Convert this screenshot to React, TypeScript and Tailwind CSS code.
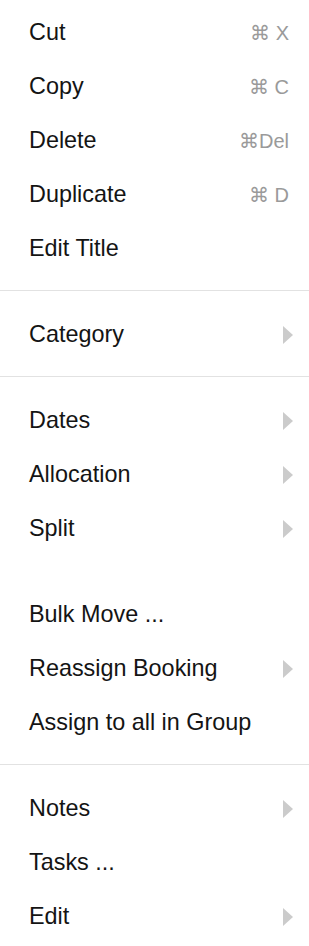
type Item = { label: string; shortcut?: string; submenu?: boolean };

const groups: { items: Item[]; divider: boolean }[] = [
  {
    items: [
      { label: 'Cut', shortcut: '⌘ X' },
      { label: 'Copy', shortcut: '⌘ C' },
      { label: 'Delete', shortcut: '⌘Del' },
      { label: 'Duplicate', shortcut: '⌘ D' },
      { label: 'Edit Title' },
    ],
    divider: true,
  },
  { items: [{ label: 'Category', submenu: true }], divider: true },
  {
    items: [
      { label: 'Dates', submenu: true },
      { label: 'Allocation', submenu: true },
      { label: 'Split', submenu: true },
    ],
    divider: false,
  },
  {
    items: [
      { label: 'Bulk Move ...' },
      { label: 'Reassign Booking', submenu: true },
      { label: 'Assign to all in Group' },
    ],
    divider: true,
  },
  {
    items: [
      { label: 'Notes', submenu: true },
      { label: 'Tasks ...' },
      { label: 'Edit', submenu: true },
    ],
    divider: false,
  },
];

function Arrow() {
  return (
    <svg width="10" height="18" viewBox="0 0 10 18" className="block">
      <path d="M0 0 L10 9 L0 18 Z" fill="#cbcbcb" />
    </svg>
  );
}

function Row({ item }: { item: Item }) {
  return (
    <div className="h-[54px] flex items-center justify-between pl-[29px] pr-[19px]">
      <span className="text-[23.4px] text-[#141414] leading-none">{item.label}</span>
      {item.shortcut && (
        <span className="text-[20px] text-[#9a9a9a] leading-none pr-[1px]">{item.shortcut}</span>
      )}
      {item.submenu && (
        <span className="mr-[-3px]">
          <Arrow />
        </span>
      )}
    </div>
  );
}

export default function App() {
  return (
    <div
      className="w-[309px] h-[946px] bg-white overflow-hidden"
      style={{ fontFamily: '"Liberation Sans", Arial, "DejaVu Sans", sans-serif' }}
    >
      {groups.map((g, i) => (
        <div key={i}>
          <div className={i === 0 ? 'pt-[6px] pb-[14px]' : 'pt-[17px] pb-[14px]'}>
            {g.items.map((it) => (
              <Row key={it.label} item={it} />
            ))}
          </div>
          {i < groups.length - 1 && (
            <div className={g.divider ? 'h-px bg-[#e2e2e2]' : 'h-px bg-white'} />
          )}
        </div>
      ))}
    </div>
  );
}
